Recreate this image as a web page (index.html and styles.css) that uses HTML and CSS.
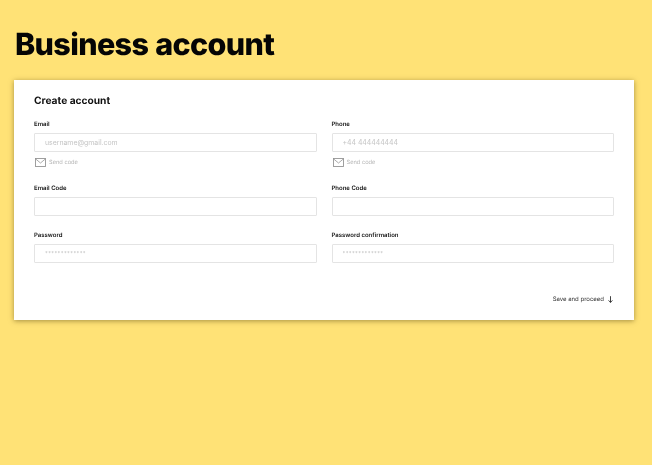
FILE: index.html
```html
<!DOCTYPE html>
<html lang="en">
<head>
<meta charset="utf-8">
<title>Business account</title>
<link rel="stylesheet" href="styles.css">
</head>
<body>
<main class="page">
  <h1 class="title">Business account</h1>
  <section class="card">
    <h2 class="card-title">Create account</h2>
    <form class="form">
      <div class="field">
        <label class="label">Email</label>
        <input class="input" placeholder="username@gmail.com">
        <div class="send">
          <svg class="mail" viewBox="0 0 11 9" aria-hidden="true"><rect x="0.5" y="0.5" width="10" height="8" fill="none" stroke="#959595" stroke-width="0.9"/><path d="M0.7 1 5.5 5 10.3 1" fill="none" stroke="#959595" stroke-width="0.8"/></svg>
          <span>Send code</span>
        </div>
      </div>
      <div class="field">
        <label class="label">Phone</label>
        <input class="input" placeholder="+44 444444444">
        <div class="send">
          <svg class="mail" viewBox="0 0 11 9" aria-hidden="true"><rect x="0.5" y="0.5" width="10" height="8" fill="none" stroke="#959595" stroke-width="0.9"/><path d="M0.7 1 5.5 5 10.3 1" fill="none" stroke="#959595" stroke-width="0.8"/></svg>
          <span>Send code</span>
        </div>
      </div>
      <div class="field">
        <label class="label">Email Code</label>
        <input class="input">
      </div>
      <div class="field">
        <label class="label">Phone Code</label>
        <input class="input">
      </div>
      <div class="field">
        <label class="label">Password</label>
        <input class="input dots" placeholder="*************">
      </div>
      <div class="field">
        <label class="label">Password confirmation</label>
        <input class="input dots" placeholder="*************">
      </div>
    </form>
    <div class="actions">
      <span>Save and proceed</span>
      <svg class="arrow" viewBox="0 0 5 7" aria-hidden="true"><path d="M2.5 0.2V6.4M0.6 4.4 2.5 6.4 4.4 4.4" fill="none" stroke="#111" stroke-width="0.8"/></svg>
    </div>
  </section>
</main>
</body>
</html>
```
FILE: styles.css
```css
* { box-sizing: border-box; }
html, body { margin: 0; height: 100%; }
body {
  background: #ffe276;
  font-family: Inter, "Liberation Sans", sans-serif;
  color: #111;
  overflow: hidden;
  text-rendering: geometricPrecision;
}
.page { padding: 26px 18px 0 14px; }
.title {
  margin: 0 0 17px 1px;
  font-size: 30.5px;
  line-height: 37px;
  font-weight: 800;
  color: #050505;
  letter-spacing: -0.65px;
  word-spacing: 1px;
  will-change: transform;
}
.card {
  height: 240px;
  background: #fff;
  padding: 15px 20px 0;
  box-shadow: 0 1px 5px rgba(90, 75, 20, 0.55);
  will-change: transform;
}
.card-title {
  margin: 0 0 13px;
  font-size: 10.2px;
  line-height: 13px;
  font-weight: 700;
}
.form {
  display: grid;
  grid-template-columns: 1fr 1fr;
  column-gap: 15px;
  row-gap: 16px;
}
.field { display: flex; flex-direction: column; }
.label {
  font-size: 6px;
  line-height: 8px;
  font-weight: 600;
  margin-bottom: 4px;
}
.input {
  display: block;
  width: 100%;
  height: 19px;
  border: 1px solid #e4e4e4;
  border-radius: 1px;
  background: #fff;
  padding: 0 10px;
  font: 400 6.9px Inter, "Liberation Sans", sans-serif;
  outline: none;
}
.input::placeholder { color: #c4c4c4; opacity: 1; }
.dots { font-size: 5.5px; letter-spacing: 0.4px; }
.send {
  display: flex;
  align-items: center;
  gap: 3px;
  margin: 6px 0 2px;
  height: 9px;
  padding-left: 1px;
  font-size: 5.7px;
  color: #b5b5b5;
}
.mail { width: 11px; height: 9px; flex: none; }
.actions {
  display: flex;
  justify-content: flex-end;
  align-items: center;
  gap: 4px;
  margin-top: 32px;
  padding-right: 1px;
  font-size: 6px;
  line-height: 9px;
  color: #333;
}
.arrow { width: 5px; height: 7px; }
```
